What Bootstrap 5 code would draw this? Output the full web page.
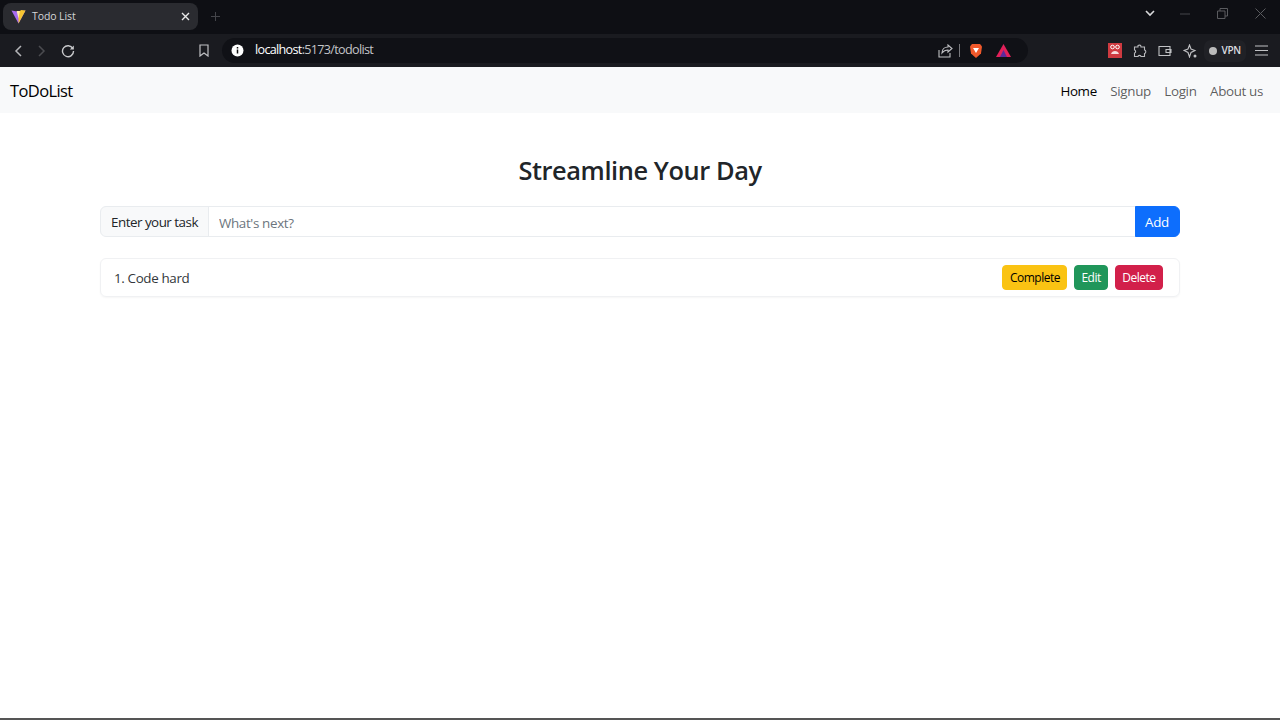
<!DOCTYPE html>
<html lang="en">
<head>
<meta charset="utf-8">
<title>Todo List</title>
<link rel="stylesheet" href="https://cdn.jsdelivr.net/npm/bootstrap@5.3.0/dist/css/bootstrap.min.css">
<style>
html,body{height:100%;overflow:hidden}
body{font-family:"Open Sans","Noto Sans",sans-serif;background:#fff;font-size:14.5px}
.shell{height:720px;border-bottom:2px solid #555}
.tabstrip{height:34px;background:#0e0f14;color:#c9cacc;font-size:10.5px}
.tabitem{width:195px;height:27px;margin:3px 0 0 3px;background:#2a2b30;border-radius:8px}
.tabtitle{color:#d5d6d8;letter-spacing:-.1px;margin-left:6px}
.newtab{margin-left:12px}
.toolbar{height:33px;background:#1a1b20;color:#e4e5e7}
.backbtn{margin-left:14px}
.fwdbtn{margin-left:16px}
.reloadbtn{margin-left:15px}
.markbtn{margin-left:124px}
.urlbar{width:806px;height:25px;margin-left:13px;padding-left:9px;background:#101116;border-radius:13px;font-size:12.6px;letter-spacing:-.68px}
.infoico{margin-right:11px}
.urlhost{color:#fff}
.urlrest{color:#c4c5c8}
.urlactions{padding-right:17px}
.shareico{margin-right:6px}
.braveico{margin-left:9px;margin-right:13px}
.wincontrols{gap:26px;padding-right:14px}
.winchevron{margin-right:-1px}
.winclose{margin-left:1px}
.ico{display:block;flex:none}
.extset{gap:11px;padding-right:12px}
.vpnpill{font-size:10px;font-weight:600;color:#dcdde0;background:#202126;border-radius:7px;height:22px;padding:0 5px;margin:0 -2px 0 -4px;letter-spacing:-.2px}
.vpndot{width:8px;height:8px;border-radius:50%;background:#bbb}
.sep{width:1px;height:13px;background:#77787c}
.topnav{height:46px;padding:2px 10px 0}
.topnav .navbar-brand{font-size:16.5px;padding:0;margin:0;letter-spacing:-.6px}
.topnav .nav-link{font-size:13.4px;padding:0;letter-spacing:-.35px}
.navlinks{gap:13.5px;margin-right:7px}
.mainwrap{width:1080px;margin:0 auto;padding-top:41px}
.headline{font-size:25.4px;font-weight:600;line-height:33px;margin:0 0 19px;letter-spacing:-.42px;color:#212529}
.entry{height:31px;margin-bottom:21px}
.entry .input-group-text,.entry .form-control{font-size:13.4px;height:31px;padding:2px 10px 0}
.entry .input-group-text{border-color:#e9ecef;color:#212529;letter-spacing:-.5px}
.entry .form-control{border-color:#e9ecef;box-shadow:none;letter-spacing:-.35px}
.entry .form-control::placeholder{color:#6c757d}
.entry .btn{font-size:13.4px;height:31px;padding:1px 11px 0 9px;letter-spacing:-.3px;width:45px}
.taskrow{height:39px;border:1px solid #f0f1f3;border-radius:6px;box-shadow:0 1px 2px rgba(0,0,0,.04);padding:0 16px 0 13px;font-size:13.4px;letter-spacing:-.36px;color:#33373b}
.tasktext{padding-top:2px}
.actionset{gap:6.5px}
.taskrow .btn{font-size:12px;padding:0 6.5px;height:25px;line-height:23px;letter-spacing:-.5px;border-radius:4px}
.taskrow .btn-warning{background:#fac313;border-color:#fac313}
.taskrow .btn-success{background:#20965a;border-color:#20965a}
.taskrow .btn-danger{background:#d2204a;border-color:#d2204a}
</style>
</head>
<body>
<div class="shell d-flex flex-column">
  <div class="tabstrip d-flex align-items-start">
    <div class="tabitem d-flex align-items-center px-2">
      <svg class="ico" width="15" height="15" viewBox="0 0 16 16"><path d="M.5 1.500 8 3l7.500-1.500L8 15.500z" fill="#a66bf0"/><path d="M8 3l3-2 4.500.5L8 15.500z" fill="#f7c531"/><path d="M6 2h3.500L8 10z" fill="#ffe9a8"/></svg>
      <span class="tabtitle flex-grow-1">Todo List</span>
      <svg class="ico" width="9" height="9" viewBox="0 0 9 9"><path d="M1 1l7 7M8 1 1 8" stroke="#e8e8e8" stroke-width="1.4"/></svg>
    </div>
    <svg class="ico newtab mt-2" width="11" height="17" viewBox="0 0 11 11"><path d="M5.500 1v9M1 5.500h9" stroke="#44454a" stroke-width="1"/></svg>
    <div class="ms-auto d-flex align-items-center wincontrols mt-2">
      <svg class="ico winchevron" width="10" height="7" viewBox="0 0 10 7"><path d="M1 1l4 4 4-4" fill="none" stroke="#d8d9db" stroke-width="1.6"/></svg>
      <svg class="ico" width="11" height="11" viewBox="0 0 11 11"><path d="M0 6h10" stroke="#45464a"/></svg>
      <svg class="ico" width="11" height="11" viewBox="0 0 11 11"><path d="M.5 3h7.500v7.500h-7.500zM3 3V.5h7.500V8H8" fill="none" stroke="#5a5b5f"/></svg>
      <svg class="ico winclose" width="11" height="11" viewBox="0 0 11 11"><path d="M.5.500l10 10M10.500.500l-10 10" stroke="#5a5b5f"/></svg>
    </div>
  </div>
  <div class="toolbar d-flex align-items-center">
    <svg class="ico backbtn" width="8" height="12" viewBox="0 0 8 12"><path d="M7 1 2 6l5 5" fill="none" stroke="#b5b6b9" stroke-width="1.5"/></svg>
    <svg class="ico fwdbtn" width="8" height="12" viewBox="0 0 8 12"><path d="M1 1l5 5-5 5" fill="none" stroke="#4b4c50" stroke-width="1.5"/></svg>
    <svg class="ico reloadbtn" width="14" height="14" viewBox="0 0 14 14"><path d="M11.800 4.500A5.500 5.500 0 1 0 12.500 7" fill="none" stroke="#c9cacc" stroke-width="1.400"/><path d="M12.800 1.500v4h-4z" fill="#c9cacc"/></svg>
    <svg class="ico markbtn" width="10" height="13" viewBox="0 0 10 13"><path d="M1 1h8v11L5 9l-4 3z" fill="none" stroke="#c0c1c4" stroke-width="1.200"/></svg>
    <div class="urlbar d-flex align-items-center">
      <svg class="ico infoico" width="13" height="13" viewBox="0 0 13 13"><circle cx="6.500" cy="6.500" r="6" fill="#fff"/><path d="M6.500 5.500v4M6.500 3v1.400" stroke="#111" stroke-width="1.500"/></svg>
      <span><span class="urlhost">localhost</span><span class="urlrest">:5173/todolist</span></span>
      <div class="ms-auto d-flex align-items-center urlactions">
        <svg class="ico shareico" width="15" height="14" viewBox="0 0 15 14"><path d="M1 6v7h11V9M4 9c0-4 3-6 6-6V1l4 3.500L10 8V6C7.500 6 5.500 7 4 9z" fill="none" stroke="#c0c1c4" stroke-width="1.100"/></svg>
        <span class="sep"></span>
        <svg class="ico braveico" width="14" height="16" viewBox="0 0 14 16"><path d="M3 1h8l2 2.500-1 7L7 15l-5-4.500-1-7z" fill="#f0592b"/><path d="M4 5h6L7 10z" fill="#fff"/></svg>
        <svg class="ico" width="15" height="13" viewBox="0 0 15 13"><path d="M7.500 0 15 13H0z" fill="#e2205a"/><path d="M7.500 6 11 13H4z" fill="#5b2a9a"/></svg>
      </div>
    </div>
    <div class="d-flex align-items-center extset ms-auto">
      <svg class="ico" width="14" height="15" viewBox="0 0 14 15"><rect width="14" height="15" fill="#cf3a40"/><circle cx="4.500" cy="4" r="1.800" fill="none" stroke="#fff"/><circle cx="9.500" cy="4" r="1.800" fill="none" stroke="#fff"/><path d="M3 11c1-4 7-4 8 0z" fill="#f8dcdc"/></svg>
      <svg class="ico" width="14" height="14" viewBox="0 0 14 14"><path d="M5 1.500c2-1 3 0 3 1.500h3.500v3c1.500 0 2 3 0 3.500v3H8C8 11 5 11 5 12.500H1.500V9C3 9 3 6 1.500 6V3H5z" fill="none" stroke="#b9babd" stroke-width="1.100"/></svg>
      <svg class="ico" width="14" height="13" viewBox="0 0 14 13"><path d="M1 2.500h11v9H1zM8 5.500h5v3H8z" fill="none" stroke="#c0c1c4" stroke-width="1.100"/></svg>
      <svg class="ico" width="14" height="14" viewBox="0 0 14 14"><path d="M6.500 1 8 5l4 1.500L8 8.500 6.500 13 5 8.500 1 6.500 5 5z" fill="none" stroke="#c0c1c4" stroke-width="1.100"/><circle cx="12" cy="12" r="1.500" fill="#c0c1c4"/></svg>
      <div class="vpnpill d-flex align-items-center gap-1"><span class="vpndot"></span>VPN</div>
      <svg class="ico" width="13" height="11" viewBox="0 0 13 11"><path d="M0 1h13M0 5.500h13M0 10h13" stroke="#c0c1c4" stroke-width="1.100"/></svg>
    </div>
  </div>
  <nav class="navbar bg-body-tertiary topnav flex-nowrap">
    <a class="navbar-brand" href="#">ToDoList</a>
    <div class="navbar-nav flex-row navlinks">
      <a class="nav-link active" href="#">Home</a>
      <a class="nav-link" href="#">Signup</a>
      <a class="nav-link" href="#">Login</a>
      <a class="nav-link" href="#">About us</a>
    </div>
  </nav>
  <main class="mainwrap">
    <h2 class="headline text-center">Streamline Your Day</h2>
    <div class="input-group entry">
      <span class="input-group-text">Enter your task</span>
      <input type="text" class="form-control" placeholder="What's next?">
      <button class="btn btn-primary" type="button">Add</button>
    </div>
    <div class="taskrow d-flex align-items-center justify-content-between">
      <span class="tasktext">1. Code hard</span>
      <div class="d-flex actionset">
        <button class="btn btn-warning" type="button">Complete</button>
        <button class="btn btn-success" type="button">Edit</button>
        <button class="btn btn-danger" type="button">Delete</button>
      </div>
    </div>
  </main>
</div>
<script src="https://cdn.jsdelivr.net/npm/bootstrap@5.3.0/dist/js/bootstrap.bundle.min.js"></script>
</body>
</html>
